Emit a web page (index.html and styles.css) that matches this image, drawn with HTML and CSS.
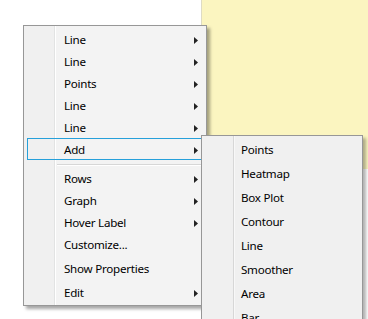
FILE: index.html
```html
<!DOCTYPE html>
<html>
<head>
<meta charset="utf-8">
<link rel="stylesheet" href="styles.css">
</head>
<body>
<div class="page">
  <div class="blank"></div>
  <div class="plot"></div>

  <div class="menu main">
    <div class="item"><span class="label">Line</span><svg class="arrow" width="4" height="7" viewBox="0 0 4 7"><polygon points="0,0 4,3.5 0,7"/></svg></div>
    <div class="item"><span class="label">Line</span><svg class="arrow" width="4" height="7" viewBox="0 0 4 7"><polygon points="0,0 4,3.5 0,7"/></svg></div>
    <div class="item"><span class="label">Points</span><svg class="arrow" width="4" height="7" viewBox="0 0 4 7"><polygon points="0,0 4,3.5 0,7"/></svg></div>
    <div class="item"><span class="label">Line</span><svg class="arrow" width="4" height="7" viewBox="0 0 4 7"><polygon points="0,0 4,3.5 0,7"/></svg></div>
    <div class="item"><span class="label">Line</span><svg class="arrow" width="4" height="7" viewBox="0 0 4 7"><polygon points="0,0 4,3.5 0,7"/></svg></div>
    <div class="item open"><span class="label">Add</span><svg class="arrow" width="4" height="7" viewBox="0 0 4 7"><polygon points="0,0 4,3.5 0,7"/></svg></div>
    <div class="sep"></div>
    <div class="item"><span class="label">Rows</span><svg class="arrow" width="4" height="7" viewBox="0 0 4 7"><polygon points="0,0 4,3.5 0,7"/></svg></div>
    <div class="item"><span class="label">Graph</span><svg class="arrow" width="4" height="7" viewBox="0 0 4 7"><polygon points="0,0 4,3.5 0,7"/></svg></div>
    <div class="item"><span class="label">Hover Label</span><svg class="arrow" width="4" height="7" viewBox="0 0 4 7"><polygon points="0,0 4,3.5 0,7"/></svg></div>
    <div class="item tall"><span class="label">Customize...</span></div>
    <div class="item tall"><span class="label">Show Properties</span></div>
    <div class="item"><span class="label">Edit</span><svg class="arrow" width="4" height="7" viewBox="0 0 4 7"><polygon points="0,0 4,3.5 0,7"/></svg></div>
  </div>

  <div class="menu sub">
    <div class="item"><span class="label">Points</span></div>
    <div class="item"><span class="label">Heatmap</span></div>
    <div class="item"><span class="label">Box Plot</span></div>
    <div class="item"><span class="label">Contour</span></div>
    <div class="item"><span class="label">Line</span></div>
    <div class="item"><span class="label">Smoother</span></div>
    <div class="item"><span class="label">Area</span></div>
    <div class="item"><span class="label">Bar</span></div>
  </div>
</div>
</body>
</html>
```

FILE: styles.css
```css
html, body {
  margin: 0;
  padding: 0;
  background: #ffffff;
}

body {
  font-family: "Noto Sans", "DejaVu Sans", sans-serif;
  font-size: 11.6px;
  letter-spacing: -0.25px;
  color: #000000;
}

.page {
  position: relative;
  width: 368px;
  height: 319px;
  overflow: hidden;
  display: grid;
  grid-template-columns: 201px 1fr;
  grid-template-rows: 169px 1fr;
}

.blank {
  grid-column: 1;
  grid-row: 1;
}

.plot {
  grid-column: 2;
  grid-row: 1;
  background: #fbf5c0;
  border-left: 1px solid #dedbc4;
}

.menu {
  position: absolute;
  box-sizing: border-box;
  border: 1px solid #979797;
}

.main {
  left: 23px;
  top: 25px;
  width: 184px;
  height: 281px;
  padding: 2px 3px 2px 3px;
  background: linear-gradient(to right, #f0f0f0 0 30px, #e2e3e3 30px 31px, #ffffff 31px 32px, #f3f3f3 32px);
  box-shadow: 3px 3px 3px rgba(0, 0, 0, 0.35);
}

.item {
  display: flex;
  align-items: center;
  box-sizing: border-box;
  height: 22px;
  border: 1px solid transparent;
  padding-left: 36px;
  padding-right: 4px;
}

.item .label {
  flex: 1;
  line-height: 20px;
  padding-top: 2px;
  white-space: nowrap;
}

.item .arrow {
  display: block;
  fill: #222222;
  margin-top: 2px;
}

.item.open {
  border-color: #26a0da;
}

.item.tall {
  height: 24px;
  padding-bottom: 2px;
}

.sep {
  height: 1px;
  margin: 4px 0 1px 30px;
  background: #d7d7d7;
  border-bottom: 1px solid #ffffff;
}

.sub {
  left: 201px;
  top: 135px;
  width: 162px;
  height: 200px;
  padding: 3px 3px 0 3px;
  background: linear-gradient(to right, #f0f0f0 0 31px, #d7d7d7 31px 32px, #f8f8f8 32px 33px, #f0f0f0 33px);
  box-shadow: 3px 3px 3px rgba(0, 0, 0, 0.3);
}

.sub .item {
  height: 24px;
  padding-left: 35px;
  align-items: flex-start;
}

.sub .item .label {
  line-height: 18px;
  padding-top: 1px;
}
```
